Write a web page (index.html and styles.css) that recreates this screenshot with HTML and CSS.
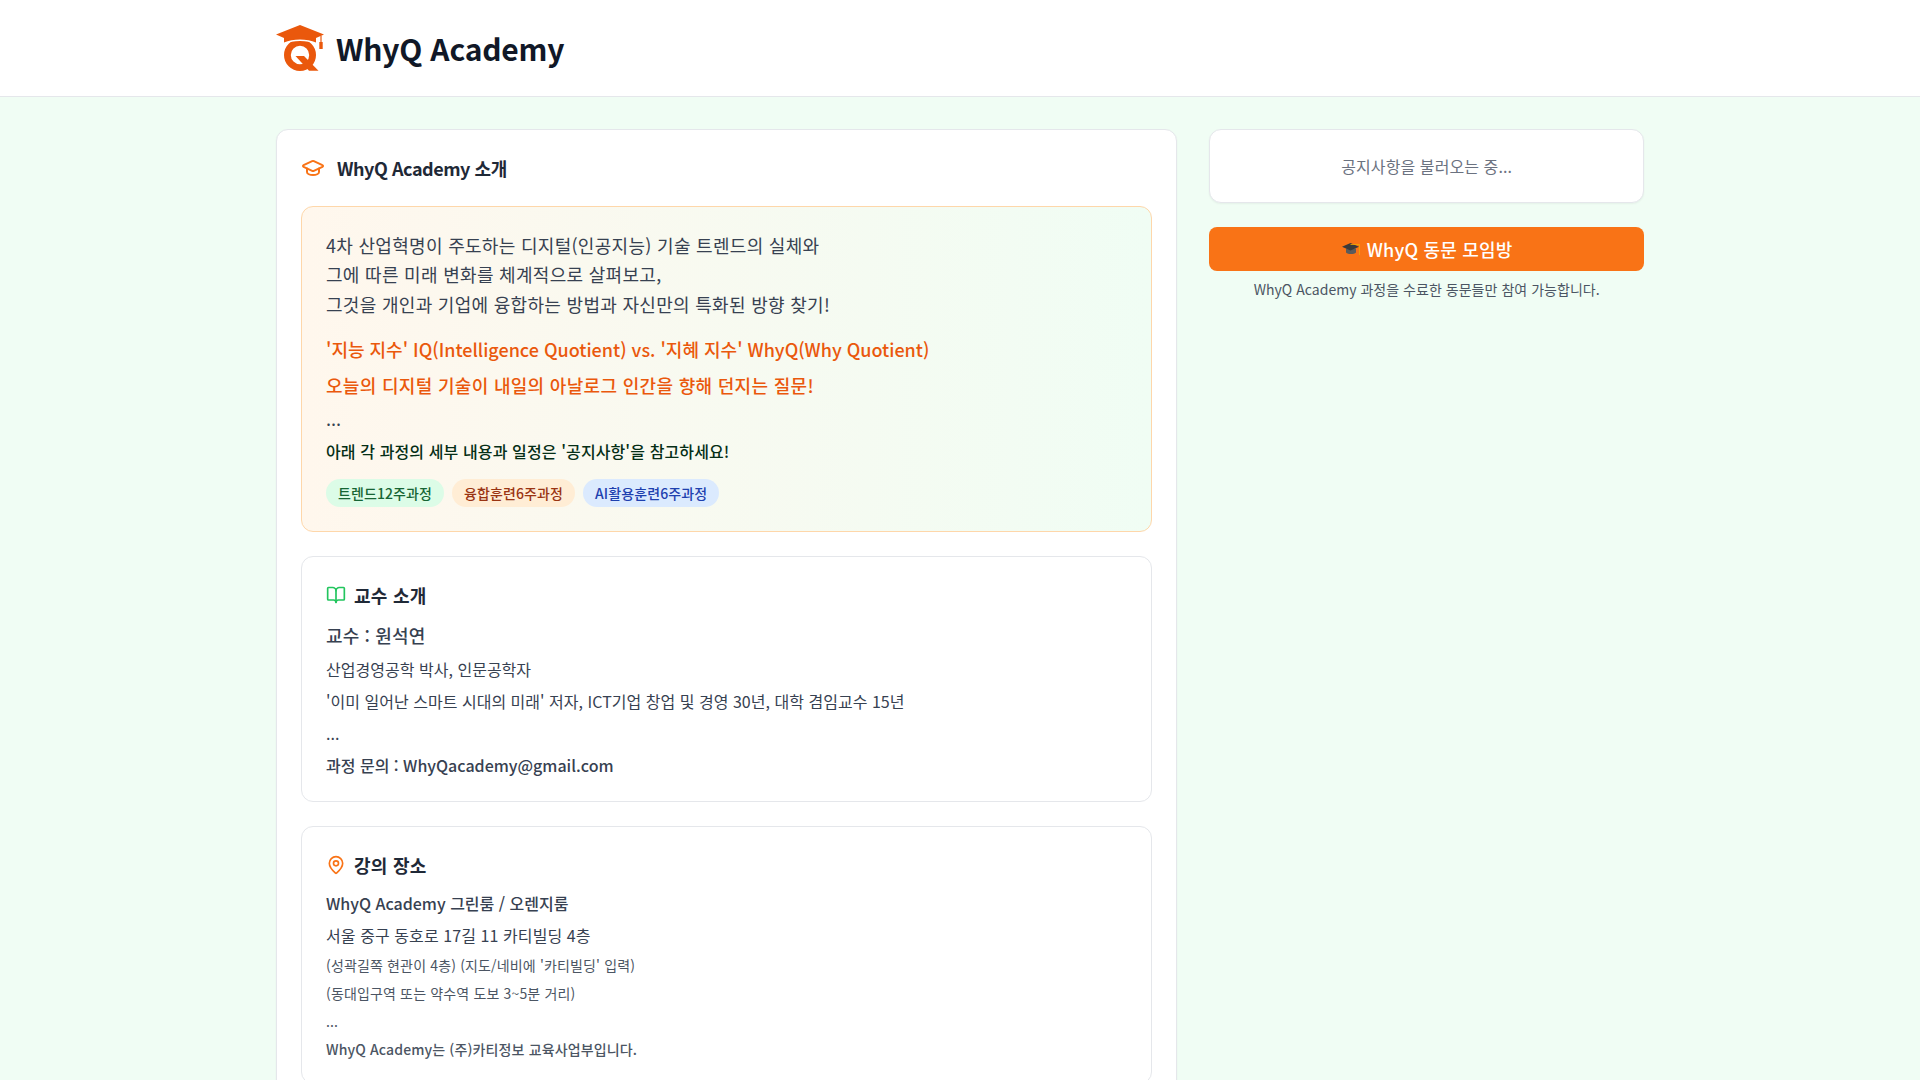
FILE: index.html
```html
<!DOCTYPE html>
<html lang="ko">
<head>
	<meta charset="UTF-8">
	<title>WhyQ Academy</title>
	<link rel="stylesheet" href="styles.css">
</head>
<body>
	<header class="site-header">
		<div class="container brand">
			<svg class="brand-logo" viewBox="0 0 50 48" aria-hidden="true">
				<circle class="logo-ring" cx="24" cy="31" r="12.600"/>
				<path class="logo-fill" d="M19.500 32h8.500l14.500 14.700h-9.500z"/>
				<path class="logo-cap" d="M24 1 0 10.500l8 3.500v4.500c9-4 23-4 32 0V14l8-3.500z"/>
				<path class="logo-tassel" d="M45 11.500v7"/>
				<path class="logo-fill" d="M43.300 18h3.400v7h-3.400z"/>
			</svg>
			<span class="brand-name">WhyQ Academy</span>
		</div>
	</header>

	<main class="container layout">
		<section class="card main-card">
			<h2 class="main-title">
				<svg class="icon icon-cap" viewBox="0 0 24 24" aria-hidden="true">
					<path d="M21.420 10.922a1 1 0 0 0-.019-1.838L12.830 5.180a2 2 0 0 0-1.660 0L2.600 9.080a1 1 0 0 0 0 1.832l8.570 3.908a2 2 0 0 0 1.660 0z"/>
					<path d="M6 12.500V16a6 3 0 0 0 12 0v-3.500"/>
				</svg>
				WhyQ Academy 소개
			</h2>

			<div class="intro">
				<p class="intro-lead">4차 산업혁명이 주도하는 디지털(인공지능) 기술 트렌드의 실체와<br>그에 따른 미래 변화를 체계적으로 살펴보고,<br>그것을 개인과 기업에 융합하는 방법과 자신만의 특화된 방향 찾기!</p>
				<p class="intro-accent">'지능 지수' IQ(Intelligence Quotient) vs. '지혜 지수' WhyQ(Why Quotient)</p>
				<p class="intro-accent intro-question">오늘의 디지털 기술이 내일의 아날로그 인간을 향해 던지는 질문!</p>
				<p class="intro-dots">...</p>
				<p class="intro-note">아래 각 과정의 세부 내용과 일정은 '공지사항'을 참고하세요!</p>
				<div class="tags">
					<span class="tag tag-green">트렌드12주과정</span>
					<span class="tag tag-orange">융합훈련6주과정</span>
					<span class="tag tag-blue">AI활용훈련6주과정</span>
				</div>
			</div>

			<div class="sub-card">
				<h3 class="sub-title">
					<svg class="icon icon-book" viewBox="0 0 24 24" aria-hidden="true">
						<path d="M12 7v14"/>
						<path d="M3 18a1 1 0 0 1-1-1V4a1 1 0 0 1 1-1h5a4 4 0 0 1 4 4 4 4 0 0 1 4-4h5a1 1 0 0 1 1 1v13a1 1 0 0 1-1 1h-6a3 3 0 0 0-3 3 3 3 0 0 0-3-3z"/>
					</svg>
					교수 소개
				</h3>
				<p class="prof-name">교수 : 원석연</p>
				<p class="prof-line">산업경영공학 박사, 인문공학자</p>
				<p class="prof-line">'이미 일어난 스마트 시대의 미래' 저자, ICT기업 창업 및 경영 30년, 대학 겸임교수 15년</p>
				<p class="prof-line">...</p>
				<p class="prof-contact">과정 문의 : WhyQacademy@gmail.com</p>
			</div>

			<div class="sub-card">
				<h3 class="sub-title">
					<svg class="icon icon-pin" viewBox="0 0 24 24" aria-hidden="true">
						<path d="M20 10c0 4.993-5.539 10.193-7.399 11.799a1 1 0 0 1-1.202 0C9.539 20.193 4 14.993 4 10a8 8 0 0 1 16 0"/>
						<circle cx="12" cy="10" r="3"/>
					</svg>
					강의 장소
				</h3>
				<p class="place-name">WhyQ Academy 그린룸 / 오렌지룸</p>
				<p class="place-addr">서울 중구 동호로 17길 11 카티빌딩 4층</p>
				<p class="place-small">(성곽길쪽 현관이 4층) (지도/네비에 '카티빌딩' 입력)</p>
				<p class="place-small">(동대입구역 또는 약수역 도보 3~5분 거리)</p>
				<p class="place-small">...</p>
				<p class="place-company">WhyQ Academy는 (주)카티정보 교육사업부입니다.</p>
			</div>
		</section>

		<aside class="side">
			<div class="card notice">공지사항을 불러오는 중...</div>
			<a class="join-btn" href="#">
				<svg class="join-cap" viewBox="0 0 20 14" aria-hidden="true">
					<path fill="#5b5b5b" d="M5 6.500v4c2 2 8 2 10 0v-4z"/>
					<path fill="#3a3a3a" d="M9.500 1 1 4.800l8.500 3.700L18 4.800z"/>
					<path fill="none" stroke="#f2a900" stroke-width=".8" d="M9.500 2.500h9v10.500"/>
				</svg>
				WhyQ 동문 모임방
			</a>
			<p class="join-note">WhyQ Academy 과정을 수료한 동문들만 참여 가능합니다.</p>
		</aside>
	</main>
</body>
</html>
```

FILE: styles.css
```css
html {
	font-family:"Noto Sans CJK KR","Noto Sans",sans-serif;
	font-size:16px;
}

html,body {
	margin:0;
	padding:0;
}

body {
	background:#f0fdf4;
	color:#111827;
}

h2,h3,p {
	margin:0;
}

.container {
	width:1368px;
	margin:0 auto;
}

.site-header {
	background:#fff;
	border-bottom:1px solid #e5e7eb;
}

.brand {
	display:flex;
	align-items:center;
	gap:10px;
	height:96px;
}

.brand-logo {
	width:50px;
	height:48px;
}

.logo-ring {
	fill:none;
	stroke:#ea580c;
	stroke-width:6.800;
}

.logo-fill {
	fill:#ea580c;
}

.logo-cap {
	fill:#ea580c;
	stroke:#fff;
	stroke-width:3;
	paint-order:stroke;
}

.logo-tassel {
	fill:none;
	stroke:#ea580c;
	stroke-width:1.200;
}

.brand-name {
	font-size:30px;
	font-weight:700;
	letter-spacing:-.2px;
	color:#111827;
}

.layout {
	display:grid;
	grid-template-columns:repeat(3,1fr);
	gap:32px;
	padding-top:32px;
	padding-bottom:32px;
	align-items:start;
}

.card {
	background:#fff;
	border:1px solid #e5e7eb;
	border-radius:12px;
	box-shadow:0 1px 2px rgba(0,0,0,.05);
}

.main-card {
	grid-column:span 2;
	padding:24px;
}

.icon {
	fill:none;
	stroke-width:2;
	stroke-linecap:round;
	stroke-linejoin:round;
	flex:none;
}

.icon-cap {
	width:24px;
	height:24px;
	stroke:#f97316;
}

.icon-book {
	width:20px;
	height:20px;
	stroke:#22c55e;
}

.icon-pin {
	width:20px;
	height:20px;
	stroke:#f97316;
}

.main-title {
	display:flex;
	align-items:center;
	gap:12px;
	font-size:18px;
	font-weight:700;
	line-height:28px;
	letter-spacing:-.45px;
	color:#1f2937;
	margin-bottom:24px;
}

.intro {
	background:linear-gradient(to right,#fff7ed,#f0fdf4);
	border:1px solid #fed7aa;
	border-radius:12px;
	padding:24px;
	margin-bottom:24px;
}

.intro-lead {
	font-size:18px;
	line-height:29.250px;
	letter-spacing:.3px;
	color:#374151;
	margin-bottom:13px;
}

.intro-accent {
	font-size:18px;
	font-weight:500;
	line-height:29px;
	color:#ea580c;
	padding:3px 0 4px;
}

.intro-question {
	letter-spacing:.31px;
}

.intro-dots {
	font-size:18px;
	line-height:28px;
	color:#374151;
}

.intro-note {
	font-size:16px;
	font-weight:500;
	line-height:24px;
	letter-spacing:.11px;
	color:#052e16;
	margin-top:7px;
}

.tags {
	display:flex;
	gap:8px;
	margin-top:16px;
}

.tag {
	font-size:14px;
	font-weight:500;
	line-height:20px;
	letter-spacing:.1px;
	padding:4px 12px;
	border-radius:999px;
}

.tag-green {
	background:#dcfce7;
	color:#166534;
}

.tag-orange {
	background:#ffedd5;
	color:#9a3412;
}

.tag-blue {
	background:#dbeafe;
	color:#1e40af;
}

.sub-card {
	border:1px solid #e5e7eb;
	border-radius:12px;
	padding:24px;
	margin-bottom:24px;
}

.sub-card:last-child {
	margin-bottom:0;
}

.sub-title {
	display:flex;
	align-items:center;
	gap:8px;
	font-size:18px;
	font-weight:700;
	line-height:28px;
	letter-spacing:.25px;
	color:#1f2937;
	margin-bottom:12px;
}

.prof-name {
	font-size:18px;
	font-weight:500;
	line-height:28px;
	letter-spacing:.15px;
	color:#374151;
	margin-bottom:8px;
}

.prof-line {
	font-size:16px;
	line-height:24px;
	letter-spacing:.02px;
	color:#374151;
	margin-bottom:8px;
}

.prof-contact {
	font-size:16px;
	font-weight:500;
	line-height:24px;
	color:#374151;
}

.place-name {
	font-size:16px;
	font-weight:500;
	line-height:24px;
	color:#374151;
	margin-bottom:8px;
}

.place-addr {
	font-size:16px;
	line-height:24px;
	letter-spacing:.08px;
	color:#374151;
	margin-bottom:8px;
}

.place-small {
	font-size:14px;
	line-height:20px;
	letter-spacing:.15px;
	color:#4b5563;
	margin-bottom:8px;
}

.place-company {
	font-size:14px;
	font-weight:500;
	line-height:20px;
	letter-spacing:.13px;
	color:#4b5563;
}

.side {
	display:flex;
	flex-direction:column;
}

.notice {
	padding:24px;
	text-align:center;
	font-size:16px;
	line-height:24px;
	letter-spacing:.08px;
	color:#6b7280;
	margin-bottom:24px;
}

.join-btn {
	display:flex;
	align-items:center;
	justify-content:center;
	gap:6px;
	height:44px;
	border-radius:8px;
	background:#f97316;
	color:#fff;
	font-size:18px;
	font-weight:500;
	letter-spacing:.2px;
	text-decoration:none;
}

.join-cap {
	width:20px;
	height:14px;
}

.join-note {
	margin-top:8px;
	font-size:14px;
	line-height:20px;
	letter-spacing:.03px;
	text-align:center;
	color:#4b5563;
}
```
